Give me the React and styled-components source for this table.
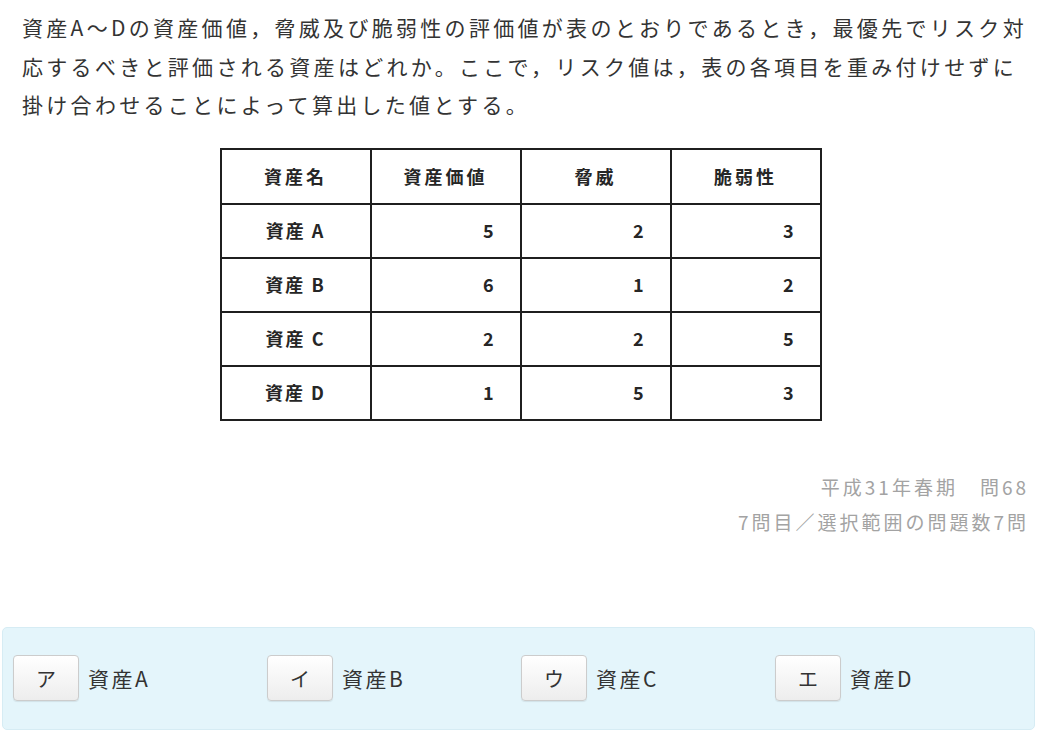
// Risk-assessment quiz page: question text, data table, meta info and answer choices

import React from 'react';
import styled, { createGlobalStyle } from 'styled-components';

const rows = [
    { name: '資産 A', value: 5, threat: 2, weak: 3 },
    { name: '資産 B', value: 6, threat: 1, weak: 2 },
    { name: '資産 C', value: 2, threat: 2, weak: 5 },
    { name: '資産 D', value: 1, threat: 5, weak: 3 },
];

const choices = [
    { key: 'ア', label: '資産A' },
    { key: 'イ', label: '資産B' },
    { key: 'ウ', label: '資産C' },
    { key: 'エ', label: '資産D' },
];

const App = () => {
    return (
        <>
            <GlobalStyle />
            <Page>
                <Question>
                    資産A～Dの資産価値，脅威及び脆弱性の評価値が表のとおりであるとき，最優先でリスク対応するべきと評価される資産はどれか。ここで，リスク値は，表の各項目を重み付けせずに掛け合わせることによって算出した値とする。
                </Question>
                <Table>
                    <thead>
                        <tr>
                            <HeadCell>資産名</HeadCell>
                            <HeadCell>資産価値</HeadCell>
                            <HeadCell>脅威</HeadCell>
                            <HeadCell>脆弱性</HeadCell>
                        </tr>
                    </thead>
                    <tbody>
                        {rows.map((r) => (
                            <tr key={r.name}>
                                <Cell $align="center">{r.name}</Cell>
                                <Cell>{r.value}</Cell>
                                <Cell>{r.threat}</Cell>
                                <Cell>{r.weak}</Cell>
                            </tr>
                        ))}
                    </tbody>
                </Table>
                <Meta>
                    <p>平成31年春期　問68</p>
                    <p>7問目／選択範囲の問題数7問</p>
                </Meta>
                <Answers>
                    {choices.map((c) => (
                        <Choice key={c.key}>
                            <ChoiceButton type="button">{c.key}</ChoiceButton>
                            <ChoiceLabel>{c.label}</ChoiceLabel>
                        </Choice>
                    ))}
                </Answers>
            </Page>
        </>
    );
};

// Styled Components + Color Variables
const textColor = '#333333';
const lineColor = '#1f1f1f';
const mutedColor = '#a3a3a3';
const answerBg = '#e4f5fb';
const fontStack = `"Noto Sans CJK JP", "Liberation Sans", sans-serif`;

const GlobalStyle = createGlobalStyle`
    body {
        margin: 0;
        background: #ffffff;
        font-family: ${fontStack};
        color: ${textColor};
    }
    p {
        margin: 0;
    }
`;

const Page = styled.div`
    width: 1045px;
    padding-top: 8px;
    box-sizing: border-box;
`;

const Question = styled.p`
    margin: 0 8px 0 22px;
    font-size: 21px;
    letter-spacing: 3.3px;
    line-height: 38.5px;
`;

const Table = styled.table`
    margin: 24px auto 0;
    position: relative;
    left: -2px;
    border-collapse: collapse;
    border: 2px solid ${lineColor};
    font-family: ${fontStack};
    font-weight: bold;
    color: #262626;
`;

const HeadCell = styled.th`
    width: 148px;
    height: 53px;
    padding: 0;
    border: 2px solid ${lineColor};
    font-size: 18px;
    letter-spacing: 3px;
    font-weight: bold;
    text-align: center;
`;

const Cell = styled.td`
    height: 50px;
    padding: 0 24px 2px 0;
    border: 2px solid ${lineColor};
    font-size: 18px;
    letter-spacing: 2px;
    text-align: ${(p) => p.$align || 'right'};
    ${(p) => p.$align === 'center' && 'padding: 0 0 2px 0;'}
`;

const Meta = styled.div`
    margin: 48px 16px 0 0;
    text-align: right;
    color: ${mutedColor};
    font-size: 19px;
    letter-spacing: 3px;
    line-height: 35px;
`;

const Answers = styled.div`
    margin: 88px 10px 0 2px;
    height: 103px;
    box-sizing: border-box;
    padding: 0 0 0 10px;
    display: grid;
    grid-template-columns: repeat(4, 254px);
    align-items: center;
    background: ${answerBg};
    border: 1px solid #d6ecf4;
    border-radius: 5px;
`;

const Choice = styled.div`
    display: flex;
    align-items: center;
    gap: 9px;
`;

const ChoiceButton = styled.button`
    width: 66px;
    height: 46px;
    padding: 0;
    border: 1px solid #cccccc;
    border-radius: 4px;
    background: linear-gradient(#ffffff, #ededed);
    box-shadow: 0 1px 1px rgba(0, 0, 0, 0.08);
    font-family: ${fontStack};
    font-size: 20px;
    color: #333333;
`;

const ChoiceLabel = styled.span`
    font-size: 21px;
    letter-spacing: 2.5px;
    color: ${textColor};
`;

export default App;
